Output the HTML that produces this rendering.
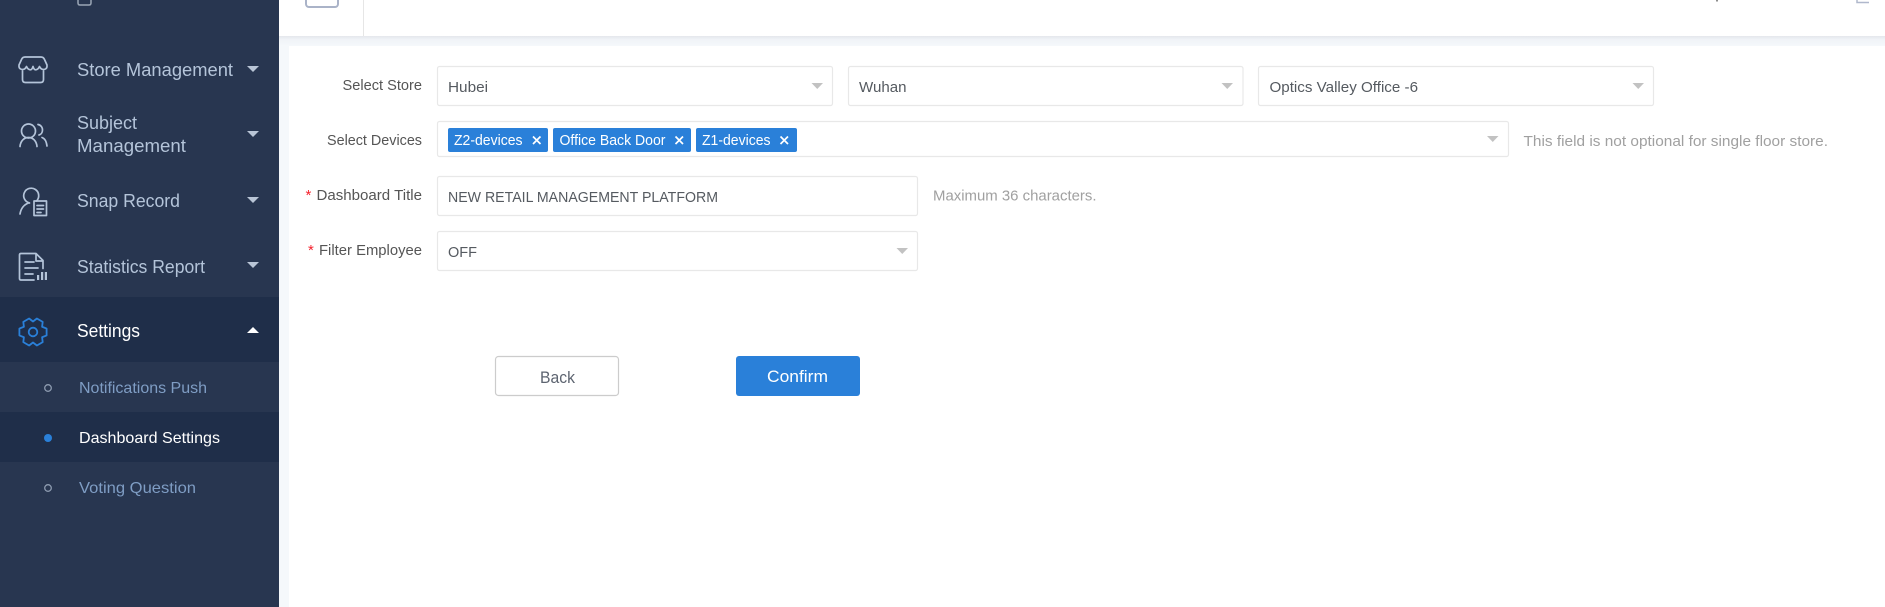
<!DOCTYPE html>
<html lang="en">
<head>
<meta charset="utf-8">
<title>Dashboard Settings</title>
<style>
html,body{margin:0;padding:0;width:1885px;height:607px;overflow:hidden;background:#fff}
svg{display:block;position:absolute;left:0;top:0}
text{font-family:"Liberation Sans",sans-serif;white-space:pre}
.m{font-size:18.5px;fill:#b4c4d9}
.s{font-size:16px;fill:#7f9dc4}
.l{font-size:15px;fill:#555}
.v{font-size:15px;fill:#555a60}
.h{font-size:15px;fill:#a0a0a0}
.t{font-size:15px;fill:#fff}
.box{fill:#fff;stroke:#e8e8e8;stroke-width:1.2}
.car{fill:#c2c2c2}
.ic{fill:none;stroke:#b4c4d9;stroke-width:1.7;stroke-linejoin:round;stroke-linecap:round}
</style>
</head>
<body>
<svg width="1885" height="607" viewBox="0 0 1885 607" xmlns="http://www.w3.org/2000/svg">
<defs>
<linearGradient id="sh" x1="0" y1="0" x2="0" y2="1">
<stop offset="0" stop-color="#e4e7ec"/><stop offset=".35" stop-color="#f0f3f7"/><stop offset="1" stop-color="#f5f8fb"/>
</linearGradient>
</defs>

<!-- page and header -->
<rect x="279" y="36" width="1606" height="571" fill="#f5f8fb"/>
<rect x="279" y="36" width="1606" height="10" fill="url(#sh)"/>
<rect x="289" y="46" width="1596" height="561" fill="#fff"/>
<rect x="306" y="-12" width="32" height="19" rx="3" fill="none" stroke="#aab3c8" stroke-width="2"/>
<rect x="363" y="0" width="1" height="36" fill="#e6e6e6"/>
<path d="M1717 0v1.500" stroke="#666" stroke-width="1.500" fill="none"/>
<path d="M1857 0v2.500h12" stroke="#b0b8cc" stroke-width="1.500" fill="none"/>

<!-- sidebar -->
<rect x="0" y="0" width="279" height="607" fill="#283650"/>
<rect x="0" y="297" width="279" height="65" fill="#1f2e49"/>
<rect x="0" y="412" width="279" height="50" fill="#1f2e49"/>

<path d="M78 0v3q0 2 2 2h9q2 0 2-2V0" fill="none" stroke="#9aa5b5" stroke-width="1.500"/>

<!-- store icon -->
<path class="ic" d="M25 57H41Q43.500 57 44.500 59.500L47 65Q47.500 69 44 69.500Q41 69.800 39.500 66.500Q38 69.800 35.500 69.800Q34 69.800 33 66.500Q32 69.800 30.500 69.800Q28 69.800 26.500 66.500Q25 69.800 22 69.500Q18.500 69 19 65L21.500 59.500Q22.500 57 25 57Z"/>
<path class="ic" d="M22.500 71v8.500q0 3 3 3h15q3 0 3-3V71"/>
<text class="m" x="77" y="76" textLength="156" lengthAdjust="spacingAndGlyphs">Store Management</text>
<path d="M247 66h12l-6 6z" fill="#b9c5d6"/>

<!-- subject icon -->
<circle class="ic" cx="28.500" cy="131" r="7"/>
<path class="ic" d="M20 146.500c.5-5.500 4-9 8.500-9s8 3.500 8.500 9"/>
<path class="ic" d="M38 124.500c3 .5 4.500 3 4.500 5.500s-1.500 4.500-3.500 5"/>
<path class="ic" d="M42 137.500c3 1 4.500 4.500 5 8.500"/>
<text class="m" x="77" y="129" textLength="60" lengthAdjust="spacingAndGlyphs">Subject</text>
<text class="m" x="77" y="152" textLength="109" lengthAdjust="spacingAndGlyphs">Management</text>
<path d="M247 131h12l-6 6z" fill="#b9c5d6"/>

<!-- snap icon -->
<path class="ic" d="M36.500 201a7.500 7.500 0 1 0-7 2"/>
<path class="ic" d="M20 214c1-6 4.500-9.500 8.500-11"/>
<rect class="ic" x="34" y="201" width="12.500" height="14.500"/>
<path class="ic" d="M37 205.500h6.500M37 209h6.500M37 212.500h4"/>
<text class="m" x="77" y="207" textLength="103" lengthAdjust="spacingAndGlyphs">Snap Record</text>
<path d="M247 197h12l-6 6z" fill="#b9c5d6"/>

<!-- statistics icon -->
<path class="ic" d="M34 280H21q-1.500 0-1.500-1.500V255q0-1.500 1.500-1.500h15l7 7v8M36 254v7h7"/>
<path class="ic" d="M25 262h9M25 268h13M25 274h8"/>
<path d="M37 275h2.200v5H37zM41 272h2.200v8H41zM44.800 272h2.200v8h-2.200z" fill="#b4c4d9"/>
<text class="m" x="77" y="273" textLength="128" lengthAdjust="spacingAndGlyphs">Statistics Report</text>
<path d="M247 262h12l-6 6z" fill="#b9c5d6"/>

<!-- settings icon -->
<g transform="translate(33 332)" fill="none" stroke="#2a80d9" stroke-width="1.800" stroke-linejoin="round">
<path d="M13.600-3.400L13.600 3.400L9.100 5.250L9.700 10.100L3.900 13.500L0 10.500L-3.900 13.500L-9.700 10.100L-9.100 5.250L-13.600 3.400L-13.600-3.400L-9.100-5.250L-9.700-10.100L-3.900-13.500L0-10.500L3.900-13.500L9.700-10.100L9.100-5.250Z"/>
<circle r="4.300"/>
</g>
<text class="m" x="77" y="337" textLength="63" lengthAdjust="spacingAndGlyphs" style="fill:#fff">Settings</text>
<path d="M247 333h12l-6-6z" fill="#fff"/>

<!-- submenu -->
<circle cx="48" cy="388" r="3.300" fill="none" stroke="#8d9bb0" stroke-width="1.300"/>
<text class="s" x="79" y="393" textLength="128" lengthAdjust="spacingAndGlyphs">Notifications Push</text>
<circle cx="48" cy="438" r="4" fill="#2a80d9"/>
<text class="s" x="79" y="443" textLength="141" lengthAdjust="spacingAndGlyphs" style="fill:#fff">Dashboard Settings</text>
<circle cx="48" cy="488" r="3.300" fill="none" stroke="#8d9bb0" stroke-width="1.300"/>
<text class="s" x="79" y="493" textLength="117" lengthAdjust="spacingAndGlyphs">Voting Question</text>

<!-- form: store -->
<text class="l" x="342.500" y="90" textLength="79.500" lengthAdjust="spacingAndGlyphs">Select Store</text>
<rect class="box" x="437.500" y="66.500" width="395" height="39" rx="2"/>
<text class="v" x="448" y="92" textLength="40" lengthAdjust="spacingAndGlyphs">Hubei</text>
<path class="car" d="M811.500 83h11.500l-5.750 6z"/>
<rect class="box" x="848.500" y="66.500" width="394.500" height="39" rx="2"/>
<text class="v" x="859" y="92" textLength="47.500" lengthAdjust="spacingAndGlyphs">Wuhan</text>
<path class="car" d="M1221.500 83h11.500l-5.750 6z"/>
<rect class="box" x="1258.500" y="66.500" width="395" height="39" rx="2"/>
<text class="v" x="1269.500" y="92" textLength="148.500" lengthAdjust="spacingAndGlyphs">Optics Valley Office -6</text>
<path class="car" d="M1632.500 83h11.500l-5.750 6z"/>

<!-- form: devices -->
<text class="l" x="327" y="145" textLength="95" lengthAdjust="spacingAndGlyphs">Select Devices</text>
<rect class="box" x="437.500" y="121.500" width="1071" height="35" rx="2"/>
<rect x="448" y="128" width="100" height="24" rx="2" fill="#2a80d9"/>
<text class="t" x="454" y="145" textLength="68.500" lengthAdjust="spacingAndGlyphs">Z2-devices</text>
<path d="M533 136.500l7.500 7.500m0-7.500l-7.500 7.500" stroke="#fff" stroke-width="1.700" fill="none"/>
<rect x="553" y="128" width="138" height="24" rx="2" fill="#2a80d9"/>
<text class="t" x="559.500" y="145" textLength="106" lengthAdjust="spacingAndGlyphs">Office Back Door</text>
<path d="M675.500 136.500l7.500 7.500m0-7.500l-7.500 7.500" stroke="#fff" stroke-width="1.700" fill="none"/>
<rect x="696" y="128" width="101" height="24" rx="2" fill="#2a80d9"/>
<text class="t" x="702" y="145" textLength="68.500" lengthAdjust="spacingAndGlyphs">Z1-devices</text>
<path d="M780.500 136.500l7.500 7.500m0-7.500l-7.500 7.500" stroke="#fff" stroke-width="1.700" fill="none"/>
<path class="car" d="M1487 136h11.500l-5.750 6z"/>
<text class="h" x="1523.500" y="146" textLength="304.500" lengthAdjust="spacingAndGlyphs">This field is not optional for single floor store.</text>

<!-- form: title -->
<text x="305.500" y="200" style="font-size:15px;fill:#f5222d">*</text>
<text class="l" x="316.500" y="200" textLength="105.500" lengthAdjust="spacingAndGlyphs">Dashboard Title</text>
<rect class="box" x="437.500" y="176.500" width="480" height="39" rx="2"/>
<text class="v" x="448" y="202" textLength="270" lengthAdjust="spacingAndGlyphs">NEW RETAIL MANAGEMENT PLATFORM</text>
<text class="h" x="933" y="200.500" textLength="163.500" lengthAdjust="spacingAndGlyphs">Maximum 36 characters.</text>

<!-- form: filter -->
<text x="308" y="255" style="font-size:15px;fill:#f5222d">*</text>
<text class="l" x="319" y="255" textLength="103" lengthAdjust="spacingAndGlyphs">Filter Employee</text>
<rect class="box" x="437.500" y="231.500" width="480" height="39" rx="2"/>
<text class="v" x="448" y="257" textLength="29" lengthAdjust="spacingAndGlyphs">OFF</text>
<path class="car" d="M896.500 248h11.500l-5.750 6z"/>

<!-- buttons -->
<rect x="495.500" y="356.500" width="123" height="39" rx="3" fill="#fff" stroke="#ccc" stroke-width="1.200"/>
<text x="540" y="383" textLength="35" lengthAdjust="spacingAndGlyphs" style="font-size:17px;fill:#5d6470">Back</text>
<rect x="736" y="356" width="124" height="40" rx="3" fill="#2a80d9"/>
<text x="767" y="382" textLength="61" lengthAdjust="spacingAndGlyphs" style="font-size:17px;fill:#fff">Confirm</text>
</svg>
</body>
</html>
